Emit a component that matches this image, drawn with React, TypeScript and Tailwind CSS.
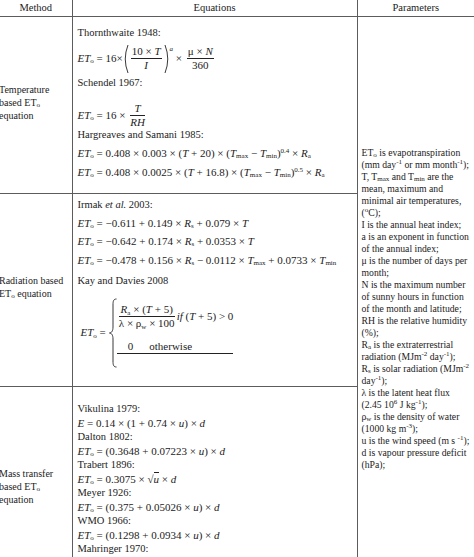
import type { ReactNode } from 'react';

const line = 'border-[#5c5c5c]';

const V = ({ c }: { c: string }) => <i>{c}</i>;

const Sub = ({ children }: { children: ReactNode }) => (
  <sub className="text-[7px]">{children}</sub>
);

const Sup = ({ children }: { children: ReactNode }) => (
  <sup className="text-[7px]">{children}</sup>
);

const ETo = () => (
  <>
    <V c="ET" />
    <Sub>o</Sub>
  </>
);

function Frac({ n, d }: { n: ReactNode; d: ReactNode }) {
  return (
    <span className="inline-flex flex-col items-center align-middle mx-[2px] leading-[13px]">
      <span className="px-[1px]">{n}</span>
      <span className="self-stretch border-t border-[#222] text-center">{d}</span>
    </span>
  );
}

const Paren = ({ r }: { r?: boolean }) => (
  <svg width="6" height="30" viewBox="0 0 6 30" className="inline-block align-middle">
    <path d={r ? 'M1 1 Q6.5 15 1 29' : 'M5 1 Q-0.5 15 5 29'} fill="none" stroke="#222" strokeWidth="0.9" />
  </svg>
);

const Label = ({ children, className = '' }: { children: ReactNode; className?: string }) => (
  <div className={`h-[14px] leading-[14px] text-[10.5px] whitespace-nowrap ${className}`}>{children}</div>
);

// equations in the first two rows sit on 16px lines
const Eq = ({ children, className = '' }: { children: ReactNode; className?: string }) => (
  <div className={`h-[16px] leading-[16px] text-[11px] whitespace-nowrap ${className}`}>{children}</div>
);

// mass transfer rows are packed tighter
const Eq14 = ({ children }: { children: ReactNode }) => (
  <div className="h-[14px] leading-[14px] text-[11px] whitespace-nowrap">{children}</div>
);

const Tmax = () => (
  <>
    <V c="T" />
    <Sub>max</Sub>
  </>
);
const Tmin = () => (
  <>
    <V c="T" />
    <Sub>min</Sub>
  </>
);

const params: ReactNode[] = [
  <>ET<Sub>o</Sub> is evapotranspiration</>,
  <>(mm day<Sup>-1</Sup> or mm month<Sup>-1</Sup>);</>,
  <>T, T<Sub>max</Sub> and T<Sub>min</Sub> are the</>,
  <>mean, maximum and</>,
  <>minimal air temperatures,</>,
  <>(<Sup>o</Sup>C);</>,
  <>I is the annual heat index;</>,
  <>a is an exponent in function</>,
  <>of the annual index;</>,
  <>μ is the number of days per</>,
  <>month;</>,
  <>N is the maximum number</>,
  <>of sunny hours in function</>,
  <>of the month and latitude;</>,
  <>RH is the relative humidity</>,
  <>(%);</>,
  <>R<Sub>a</Sub> is the extraterrestrial</>,
  <>radiation (MJm<Sup>-2</Sup> day<Sup>-1</Sup>);</>,
  <>R<Sub>s</Sub> is solar radiation (MJm<Sup>-2</Sup></>,
  <>day<Sup>-1</Sup>);</>,
  <>λ is the latent heat flux</>,
  <>(2.45 10<Sup>6</Sup> J kg<Sup>-1</Sup>);</>,
  <>ρ<Sub>w</Sub> is the density of water</>,
  <>(1000 kg m<Sup>-3</Sup>);</>,
  <>u is the wind speed (m s <Sup>-1</Sup>);</>,
  <>d is vapour pressure deficit</>,
  <>(hPa);</>,
];

export default function App() {
  return (
    <div className="w-[474px] h-[557px] overflow-hidden bg-white text-[#222] font-['Liberation_Serif','Times_New_Roman',serif]">
      <table className="table-fixed border-collapse w-[474px]">
        <colgroup>
          <col className="w-[72px]" />
          <col className="w-[285px]" />
          <col className="w-[117px]" />
        </colgroup>
        <thead>
          <tr className="h-[16px]">
            <th className={`p-0 font-normal text-[10.5px] leading-[15px] border-b border-r ${line}`}>Method</th>
            <th className={`p-0 font-normal text-[10.5px] leading-[15px] border-b border-r ${line}`}>Equations</th>
            <th className={`p-0 font-normal text-[10.5px] leading-[15px] border-b ${line}`}>Parameters</th>
          </tr>
        </thead>
        <tbody>
          <tr className="h-[177px]">
            <td className={`p-0 pt-[66px] align-top border-b border-r ${line} text-[10px] leading-[13px]`}>
              <div className="-ml-px whitespace-nowrap">
                Temperature
                <br />
                based ET<Sub>o</Sub>
                <br />
                equation
              </div>
            </td>
            <td className={`p-0 pl-[5px] align-top border-b border-r ${line}`}>
              <Label className="mt-[9px]">Thornthwaite 1948:</Label>
              <div className="mt-[3px] h-[30px] leading-[30px] text-[11px] whitespace-nowrap">
                <ETo /> = 16×
                <Paren />
                <Frac
                  n={
                    <>
                      10 × <V c="T" />
                    </>
                  }
                  d={<V c="I" />}
                />
                <Paren r />
                <sup className="text-[7px] top-[-11px]">
                  <i>a</i>
                </sup>{' '}
                ×{' '}
                <Frac
                  n={
                    <>
                      μ × <V c="N" />
                    </>
                  }
                  d="360"
                />
              </div>
              <Label className="mt-[3px]">Schendel 1967:</Label>
              <div className="mt-[12px] h-[26px] leading-[26px] text-[11px] whitespace-nowrap">
                <ETo /> = 16 × <Frac n={<V c="T" />} d={<V c="RH" />} />
              </div>
              <Label>Hargreaves and Samani 1985:</Label>
              <Eq className="mt-[3px]">
                <ETo /> = 0.408 × 0.003 × (<V c="T" /> + 20) × (<Tmax /> − <Tmin />)
                <Sup>0.4</Sup> × <V c="R" />
                <Sub>a</Sub>
              </Eq>
              <Eq className="mt-[3px]">
                <ETo /> = 0.408 × 0.0025 × (<V c="T" /> + 16.8) × (<Tmax /> − <Tmin />)
                <Sup>0.5</Sup> × <V c="R" />
                <Sub>a</Sub>
              </Eq>
            </td>
            <td rowSpan={3} className="p-0 pl-[4px] pt-[130px] align-top text-[9.7px] leading-[12px] whitespace-nowrap">
              {params.map((p, i) => (
                <div key={i}>{p}</div>
              ))}
            </td>
          </tr>
          <tr className="h-[193px]">
            <td className={`p-0 pt-[80px] align-top border-b border-r ${line} text-[10px] leading-[13px]`}>
              <div className="-ml-px whitespace-nowrap">
                Radiation based
                <br />
                ET<Sub>o</Sub> equation
              </div>
            </td>
            <td className={`p-0 pl-[5px] align-top border-b border-r ${line}`}>
              <Label className="mt-[4px]">
                Irmak <i>et al.</i> 2003:
              </Label>
              <Eq className="mt-[3px]">
                <ETo /> = −0.611 + 0.149 × <V c="R" />
                <Sub>s</Sub> + 0.079 × <V c="T" />
              </Eq>
              <Eq className="mt-[2px]">
                <ETo /> = −0.642 + 0.174 × <V c="R" />
                <Sub>s</Sub> + 0.0353 × <V c="T" />
              </Eq>
              <Eq className="mt-[3px]">
                <ETo /> = −0.478 + 0.156 × <V c="R" />
                <Sub>s</Sub> − 0.0112 × <Tmax /> + 0.0733 × <Tmin />
              </Eq>
              <Label className="mt-[6px]">Kay and Davies 2008</Label>
              <div className="mt-[10px] h-[70px] flex items-center whitespace-nowrap text-[11px]">
                <span className="ml-[3px]">
                  <ETo /> =
                </span>
                <svg width="8" height="70" viewBox="0 0 8 70" className="ml-[3px] shrink-0">
                  <path
                    d="M7.5 1 C4.5 1 4 3 4 7 L4 29 C4 33 2.5 35 0.5 35 C2.5 35 4 37 4 41 L4 63 C4 67 4.5 69 7.5 69"
                    fill="none"
                    stroke="#222"
                    strokeWidth="0.9"
                  />
                </svg>
                <div className="self-start mt-[4px] flex flex-col">
                  <div className="leading-[28px]">
                    <Frac
                      n={
                        <>
                          <V c="R" />
                          <Sub>a</Sub> × (<V c="T" /> + 5)
                        </>
                      }
                      d={
                        <>
                          λ × ρ<Sub>w</Sub> × 100
                        </>
                      }
                    />
                    <i>if</i> (<V c="T" /> + 5) &gt; 0
                  </div>
                  <div className="mt-[9px] leading-[14px] border-b border-[#222]">
                    <span className="ml-[11px]">0</span>
                    <span className="ml-[16px]">otherwise</span>
                  </div>
                </div>
              </div>
            </td>
          </tr>
          <tr className="h-[212px]">
            <td className={`p-0 pt-[80px] align-top border-r ${line} text-[10px] leading-[13px]`}>
              <div className="-ml-px whitespace-nowrap">
                Mass transfer
                <br />
                based ET<Sub>o</Sub>
                <br />
                equation
              </div>
            </td>
            <td className={`p-0 pl-[5px] align-top border-r ${line}`}>
              <Label className="mt-[15px]">Vikulina 1979:</Label>
              <Eq14>
                <V c="E" /> = 0.14 × (1 + 0.74 × <V c="u" />) × <V c="d" />
              </Eq14>
              <Label>Dalton 1802:</Label>
              <Eq14>
                <ETo /> = (0.3648 + 0.07223 × <V c="u" />) × <V c="d" />
              </Eq14>
              <Label>Trabert 1896:</Label>
              <Eq14>
                <ETo /> = 0.3075 × √
                <span className="border-t border-[#222]">
                  <V c="u" />
                </span>{' '}
                × <V c="d" />
              </Eq14>
              <Label>Meyer 1926:</Label>
              <Eq14>
                <ETo /> = (0.375 + 0.05026 × <V c="u" />) × <V c="d" />
              </Eq14>
              <Label>WMO 1966:</Label>
              <Eq14>
                <ETo /> = (0.1298 + 0.0934 × <V c="u" />) × <V c="d" />
              </Eq14>
              <Label>Mahringer 1970:</Label>
              <div className="h-[14px] pt-[1px]">
                <div className="ml-[86px] w-[30px] h-[3px] bg-[#c8c8c8]" />
              </div>
            </td>
          </tr>
        </tbody>
      </table>
    </div>
  );
}
